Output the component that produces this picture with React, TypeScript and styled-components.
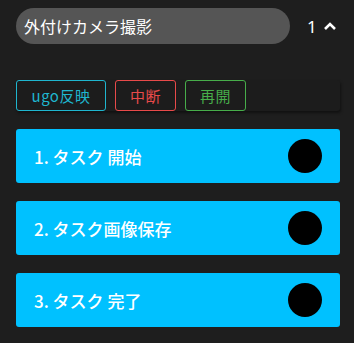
import React from 'react';
import styled, { createGlobalStyle } from 'styled-components';

const GlobalStyle = createGlobalStyle`
  html, body {
    margin: 0;
    padding: 0;
    background: #1e1e1e;
  }
  body {
    font-family: "Noto Sans CJK JP", "Noto Sans", sans-serif;
  }
`;

interface Task {
  id: number;
  label: string;
}

const tasks: Task[] = [
  { id: 1, label: '1. タスク 開始' },
  { id: 2, label: '2. タスク画像保存' },
  { id: 3, label: '3. タスク 完了' },
];

const App: React.FC = () => {
  return (
    <>
      <GlobalStyle />
      <Page>
        <Header>
          <TitlePill>外付けカメラ撮影</TitlePill>
          <Counter>
            1
            <svg width="14" height="10" viewBox="0 0 14 10">
              <path d="M2 8 L7 3 L12 8" fill="none" stroke="#fff" strokeWidth="2.6" />
            </svg>
          </Counter>
        </Header>

        <ActionBar>
          <ActionButton $color="#1fb6cf" $width={90}>ugo反映</ActionButton>
          <ActionButton $color="#e84a4a" $width={61}>中断</ActionButton>
          <ActionButton $color="#47ad4a" $width={61}>再開</ActionButton>
        </ActionBar>

        <TaskList>
          {tasks.map((task) => (
            <TaskCard key={task.id}>
              <TaskLabel>{task.label}</TaskLabel>
              <Dot />
            </TaskCard>
          ))}
        </TaskList>
      </Page>
    </>
  );
};

const Page = styled.div`
  width: 324px;
  padding: 8px 14px 16px 16px;
  display: flex;
  flex-direction: column;
`;

const Header = styled.div`
  display: flex;
  align-items: center;
  height: 36px;
`;

const TitlePill = styled.div`
  width: 274px;
  height: 36px;
  box-sizing: border-box;
  padding: 0 8px;
  border-radius: 18px;
  background: #555555;
  color: #fff;
  font-size: 16px;
  font-weight: 400;
  display: flex;
  align-items: center;
`;

const Counter = styled.div`
  margin-left: 17px;
  display: flex;
  align-items: center;
  gap: 6px;
  color: #fff;
  font-family: "Noto Sans", sans-serif;
  font-size: 17px;
  font-weight: 400;
`;

const ActionBar = styled.div`
  margin-top: 36px;
  height: 31px;
  display: flex;
  gap: 9px;
  background: #1c1c1c;
  border-radius: 3px;
  box-shadow: 1px 2px 3px rgba(0, 0, 0, 0.45);
`;

const ActionButton = styled.button<{ $color: string; $width: number }>`
  width: ${(p) => p.$width}px;
  height: 31px;
  box-sizing: border-box;
  border: 1px solid ${(p) => p.$color};
  border-radius: 3px;
  background: transparent;
  color: ${(p) => p.$color};
  font-family: "Noto Sans CJK JP", "Noto Sans", sans-serif;
  font-size: 15px;
  font-weight: 400;
  letter-spacing: 0.5px;
  padding: 0;
  display: flex;
  align-items: center;
  justify-content: center;
`;

const TaskList = styled.div`
  margin-top: 18px;
  display: flex;
  flex-direction: column;
  gap: 18px;
`;

const TaskCard = styled.div`
  height: 54px;
  box-sizing: border-box;
  padding: 0 18px;
  background: #00c1ff;
  border-radius: 3px;
  display: flex;
  align-items: center;
  justify-content: space-between;
`;

const TaskLabel = styled.span`
  color: #fff;
  font-size: 17px;
  font-weight: 500;
`;

const Dot = styled.span`
  width: 34px;
  height: 34px;
  border-radius: 50%;
  background: #000;
`;

export default App;
